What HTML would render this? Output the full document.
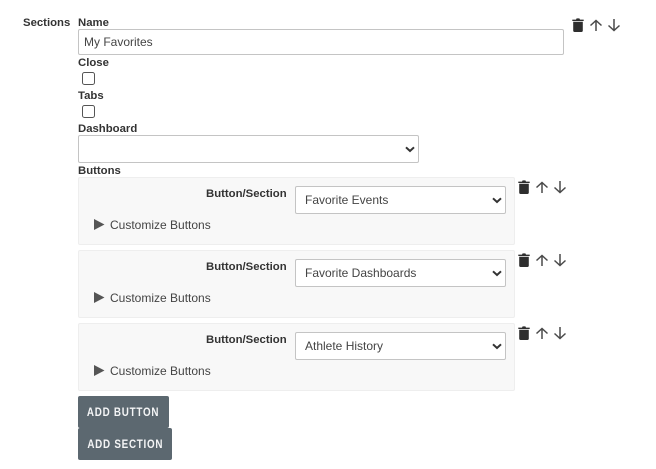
<!DOCTYPE html>
<html><head><meta charset="utf-8">
<style>
html,body{margin:0;padding:0;background:#fff}
body{width:656px;height:469px;position:relative;overflow:hidden;font-family:"Liberation Sans",sans-serif;font-size:12px;color:#333}
.a{position:absolute;white-space:nowrap}
.l{font-weight:bold;line-height:14px;color:#333;font-size:11.35px;margin-top:1px}
.box{position:absolute;box-sizing:border-box;background:#fff;border:1px solid #c4c4c4;border-radius:2px}
.t{font-size:12px;line-height:14px;color:#444;letter-spacing:0}
.cb{position:absolute;box-sizing:border-box;width:13px;height:13px;left:82px;border:1px solid #555;border-radius:2.5px;background:#fff}
.panel{position:absolute;box-sizing:border-box;left:78px;width:437px;height:68px;background:#f8f8f8;border:1px solid #eee;border-radius:2px}
.btn{position:absolute;left:78px;height:32px;background:#5c6870;color:#f4f5f6;font-weight:bold;font-size:12px;line-height:33px;text-align:center;border-radius:2px}
.btn span{display:inline-block;white-space:nowrap;letter-spacing:.9px;transform:scaleX(.82)}
svg{position:absolute;overflow:visible}
</style></head><body>
<div class="a l" style="left:23px;top:15px">Sections</div>
<div class="a l" style="left:78px;top:15px">Name</div>
<div class="box" style="left:78px;top:29px;width:486px;height:26px"></div>
<div class="a t" style="left:84px;top:35px">My Favorites</div>
<div class="a l" style="left:78px;top:55px">Close</div>
<div class="cb" style="top:72px"></div>
<div class="a l" style="left:78px;top:88px">Tabs</div>
<div class="cb" style="top:105px"></div>
<div class="a l" style="left:78px;top:121px">Dashboard</div>
<div class="box" style="left:78px;top:135px;width:341px;height:28px"></div>
<svg style="left:405px;top:146px" width="10" height="7"><path d="M1 1.3L5 5L9 1.3" fill="none" stroke="#333" stroke-width="2"/></svg>
<div class="a l" style="left:78px;top:163px">Buttons</div>

<div class="panel" style="top:177px"></div>
<div class="a l" style="left:206px;top:186px">Button/Section</div>
<div class="box" style="left:295px;top:186px;width:211px;height:28px"></div>
<div class="a t" style="left:305px;top:193px">Favorite Events</div>
<svg style="left:492px;top:197px" width="10" height="7"><path d="M1 1.3L5 5L9 1.3" fill="none" stroke="#333" stroke-width="2"/></svg>
<svg style="left:94px;top:219px" width="11" height="11"><path d="M0 0L10.5 5.5L0 11Z" fill="#555"/></svg>
<div class="a t" style="left:110px;top:218px">Customize Buttons</div>

<div class="panel" style="top:250px"></div>
<div class="a l" style="left:206px;top:259px">Button/Section</div>
<div class="box" style="left:295px;top:259px;width:211px;height:28px"></div>
<div class="a t" style="left:305px;top:266px">Favorite Dashboards</div>
<svg style="left:492px;top:270px" width="10" height="7"><path d="M1 1.3L5 5L9 1.3" fill="none" stroke="#333" stroke-width="2"/></svg>
<svg style="left:94px;top:292px" width="11" height="11"><path d="M0 0L10.5 5.5L0 11Z" fill="#555"/></svg>
<div class="a t" style="left:110px;top:291px">Customize Buttons</div>

<div class="panel" style="top:323px"></div>
<div class="a l" style="left:206px;top:332px">Button/Section</div>
<div class="box" style="left:295px;top:332px;width:211px;height:28px"></div>
<div class="a t" style="left:305px;top:339px">Athlete History</div>
<svg style="left:492px;top:343px" width="10" height="7"><path d="M1 1.3L5 5L9 1.3" fill="none" stroke="#333" stroke-width="2"/></svg>
<svg style="left:94px;top:365px" width="11" height="11"><path d="M0 0L10.5 5.5L0 11Z" fill="#555"/></svg>
<div class="a t" style="left:110px;top:364px">Customize Buttons</div>

<svg style="left:572px;top:18px" width="50" height="14"><path d="M0.3 1.6H4L4.6 .4H7.4L8 1.6H11.7V3H.3ZM1.2 3.8H10.8V12.8Q10.8 14 9.6 14H2.4Q1.2 14 1.2 12.8Z" fill="#2e2e2e"/><path d="M18.5 7.5L24 2.5L29.5 7.5M24 3V13" fill="none" stroke="#4a4a4a" stroke-width="1.5"/><path d="M36.5 7.5L42 12.5L47.5 7.5M42 1V12" fill="none" stroke="#4a4a4a" stroke-width="1.5"/></svg>
<svg style="left:518px;top:180px" width="50" height="14"><path d="M0.3 1.6H4L4.6 .4H7.4L8 1.6H11.7V3H.3ZM1.2 3.8H10.8V12.8Q10.8 14 9.6 14H2.4Q1.2 14 1.2 12.8Z" fill="#2e2e2e"/><path d="M18.5 7.5L24 2.5L29.5 7.5M24 3V13" fill="none" stroke="#4a4a4a" stroke-width="1.5"/><path d="M36.5 7.5L42 12.5L47.5 7.5M42 1V12" fill="none" stroke="#4a4a4a" stroke-width="1.5"/></svg>
<svg style="left:518px;top:253px" width="50" height="14"><path d="M0.3 1.6H4L4.6 .4H7.4L8 1.6H11.7V3H.3ZM1.2 3.8H10.8V12.8Q10.8 14 9.6 14H2.4Q1.2 14 1.2 12.8Z" fill="#2e2e2e"/><path d="M18.5 7.5L24 2.5L29.5 7.5M24 3V13" fill="none" stroke="#4a4a4a" stroke-width="1.5"/><path d="M36.5 7.5L42 12.5L47.5 7.5M42 1V12" fill="none" stroke="#4a4a4a" stroke-width="1.5"/></svg>
<svg style="left:518px;top:326px" width="50" height="14"><path d="M0.3 1.6H4L4.6 .4H7.4L8 1.6H11.7V3H.3ZM1.2 3.8H10.8V12.8Q10.8 14 9.6 14H2.4Q1.2 14 1.2 12.8Z" fill="#2e2e2e"/><path d="M18.5 7.5L24 2.5L29.5 7.5M24 3V13" fill="none" stroke="#4a4a4a" stroke-width="1.5"/><path d="M36.5 7.5L42 12.5L47.5 7.5M42 1V12" fill="none" stroke="#4a4a4a" stroke-width="1.5"/></svg>

<div class="btn" style="top:396px;width:91px"><span>ADD BUTTON</span></div>
<div class="btn" style="top:428px;width:94px"><span>ADD SECTION</span></div>
</body></html>
